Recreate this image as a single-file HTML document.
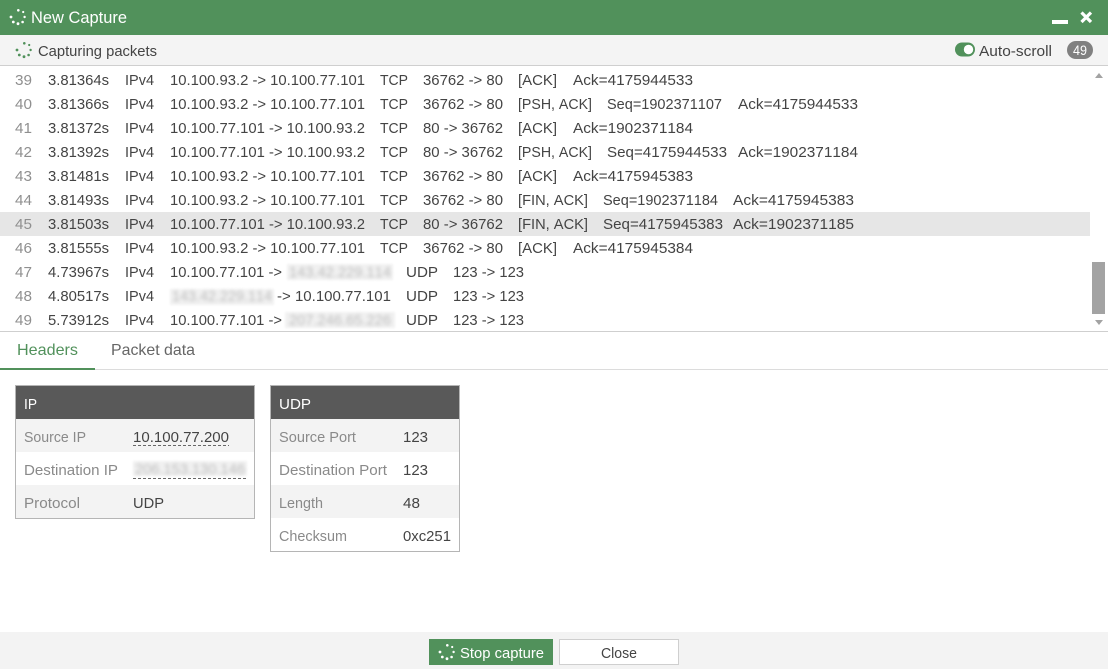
<!DOCTYPE html>
<html><head><meta charset="utf-8"><title>New Capture</title>
<style>
html,body{margin:0;padding:0;background:#fff;width:1108px;height:669px;overflow:hidden}
svg{display:block;font-family:"Liberation Sans",sans-serif;font-size:14.5px;fill:#444;font-kerning:none}
.n{fill:#8f8f8f}.l{fill:#8a8a8a}
.h{fill:#fff;font-size:15px}
.b{filter:url(#bl);fill:#bdbdbd}
.br{filter:url(#bs);fill:#f1f1f1}
</style></head><body>
<svg width="1108" height="669" viewBox="0 0 1108 669" xmlns="http://www.w3.org/2000/svg">
<defs>
<filter id="bl" x="-10%" y="-60%" width="120%" height="220%"><feGaussianBlur stdDeviation="1.8"/></filter>
<filter id="bs" x="-10%" y="-30%" width="120%" height="160%"><feGaussianBlur stdDeviation="1.2"/></filter>
<g id="sp"><circle cx="0.300" cy="-6.700" r="1.300"/><circle cx="5.200" cy="-5" r="1.100"/><circle cx="6.600" cy="0" r="1.200"/><circle cx="4.600" cy="5" r="1.300"/><circle cx="0" cy="6.700" r="1.400"/><circle cx="-4.700" cy="5" r="1.400"/><circle cx="-7" cy="0" r="1.400"/></g>
</defs>
<rect x="0" y="0" width="1108" height="35" fill="#51915b"/>
<use href="#sp" x="18" y="17" fill="#fff"/>
<text x="31" y="23" textLength="96" lengthAdjust="spacingAndGlyphs" style="fill:#fff;font-size:16.5px">New Capture</text>
<rect x="1052" y="20" width="16" height="4" fill="#fff"/>
<path d="M1081.500 12.500L1091 22M1091 12.500L1081.500 22" stroke="#fff" stroke-width="3.200" fill="none"/>

<rect x="0" y="35" width="1108" height="30" fill="#f4f4f4"/>
<rect x="0" y="65" width="1108" height="1" fill="#cfcfcf"/>
<use href="#sp" x="24" y="50" fill="#51915b"/>
<text x="38" y="56" textLength="119" lengthAdjust="spacingAndGlyphs">Capturing packets</text>
<rect x="955" y="42.500" width="20" height="14" rx="7" fill="#51915b"/>
<circle cx="968.500" cy="49.500" r="4.700" fill="#fff"/>
<text x="979" y="56" textLength="73" lengthAdjust="spacingAndGlyphs">Auto-scroll</text>
<rect x="1067" y="41" width="26" height="18" rx="9" fill="#808080"/>
<text x="1073" y="55" textLength="14" lengthAdjust="spacingAndGlyphs" style="fill:#fff;font-size:14px">49</text>

<rect x="0" y="212" width="1090" height="24" fill="#e6e6e6"/>

<!-- 39 -->
<text class="n" x="15" y="85" textLength="17" lengthAdjust="spacingAndGlyphs">39</text><text x="48" y="85" textLength="61" lengthAdjust="spacingAndGlyphs">3.81364s</text><text x="125" y="85" textLength="29" lengthAdjust="spacingAndGlyphs">IPv4</text><text x="170" y="85" textLength="195" lengthAdjust="spacingAndGlyphs">10.100.93.2 -&gt; 10.100.77.101</text><text x="380" y="85" textLength="28" lengthAdjust="spacingAndGlyphs">TCP</text><text x="423" y="85" textLength="80" lengthAdjust="spacingAndGlyphs">36762 -&gt; 80</text><text x="518" y="85" textLength="39" lengthAdjust="spacingAndGlyphs">[ACK]</text><text x="573" y="85" textLength="120" lengthAdjust="spacingAndGlyphs">Ack=4175944533</text>
<!-- 40 -->
<text class="n" x="15" y="109" textLength="17" lengthAdjust="spacingAndGlyphs">40</text><text x="48" y="109" textLength="61" lengthAdjust="spacingAndGlyphs">3.81366s</text><text x="125" y="109" textLength="29" lengthAdjust="spacingAndGlyphs">IPv4</text><text x="170" y="109" textLength="195" lengthAdjust="spacingAndGlyphs">10.100.93.2 -&gt; 10.100.77.101</text><text x="380" y="109" textLength="28" lengthAdjust="spacingAndGlyphs">TCP</text><text x="423" y="109" textLength="80" lengthAdjust="spacingAndGlyphs">36762 -&gt; 80</text><text x="518" y="109" textLength="74" lengthAdjust="spacingAndGlyphs">[PSH, ACK]</text><text x="607" y="109" textLength="115" lengthAdjust="spacingAndGlyphs">Seq=1902371107</text><text x="738" y="109" textLength="120" lengthAdjust="spacingAndGlyphs">Ack=4175944533</text>
<!-- 41 -->
<text class="n" x="15" y="133" textLength="17" lengthAdjust="spacingAndGlyphs">41</text><text x="48" y="133" textLength="61" lengthAdjust="spacingAndGlyphs">3.81372s</text><text x="125" y="133" textLength="29" lengthAdjust="spacingAndGlyphs">IPv4</text><text x="170" y="133" textLength="195" lengthAdjust="spacingAndGlyphs">10.100.77.101 -&gt; 10.100.93.2</text><text x="380" y="133" textLength="28" lengthAdjust="spacingAndGlyphs">TCP</text><text x="423" y="133" textLength="80" lengthAdjust="spacingAndGlyphs">80 -&gt; 36762</text><text x="518" y="133" textLength="39" lengthAdjust="spacingAndGlyphs">[ACK]</text><text x="573" y="133" textLength="120" lengthAdjust="spacingAndGlyphs">Ack=1902371184</text>
<!-- 42 -->
<text class="n" x="15" y="157" textLength="17" lengthAdjust="spacingAndGlyphs">42</text><text x="48" y="157" textLength="61" lengthAdjust="spacingAndGlyphs">3.81392s</text><text x="125" y="157" textLength="29" lengthAdjust="spacingAndGlyphs">IPv4</text><text x="170" y="157" textLength="195" lengthAdjust="spacingAndGlyphs">10.100.77.101 -&gt; 10.100.93.2</text><text x="380" y="157" textLength="28" lengthAdjust="spacingAndGlyphs">TCP</text><text x="423" y="157" textLength="80" lengthAdjust="spacingAndGlyphs">80 -&gt; 36762</text><text x="518" y="157" textLength="74" lengthAdjust="spacingAndGlyphs">[PSH, ACK]</text><text x="607" y="157" textLength="120" lengthAdjust="spacingAndGlyphs">Seq=4175944533</text><text x="738" y="157" textLength="120" lengthAdjust="spacingAndGlyphs">Ack=1902371184</text>
<!-- 43 -->
<text class="n" x="15" y="181" textLength="17" lengthAdjust="spacingAndGlyphs">43</text><text x="48" y="181" textLength="61" lengthAdjust="spacingAndGlyphs">3.81481s</text><text x="125" y="181" textLength="29" lengthAdjust="spacingAndGlyphs">IPv4</text><text x="170" y="181" textLength="195" lengthAdjust="spacingAndGlyphs">10.100.93.2 -&gt; 10.100.77.101</text><text x="380" y="181" textLength="28" lengthAdjust="spacingAndGlyphs">TCP</text><text x="423" y="181" textLength="80" lengthAdjust="spacingAndGlyphs">36762 -&gt; 80</text><text x="518" y="181" textLength="39" lengthAdjust="spacingAndGlyphs">[ACK]</text><text x="573" y="181" textLength="120" lengthAdjust="spacingAndGlyphs">Ack=4175945383</text>
<!-- 44 -->
<text class="n" x="15" y="205" textLength="17" lengthAdjust="spacingAndGlyphs">44</text><text x="48" y="205" textLength="61" lengthAdjust="spacingAndGlyphs">3.81493s</text><text x="125" y="205" textLength="29" lengthAdjust="spacingAndGlyphs">IPv4</text><text x="170" y="205" textLength="195" lengthAdjust="spacingAndGlyphs">10.100.93.2 -&gt; 10.100.77.101</text><text x="380" y="205" textLength="28" lengthAdjust="spacingAndGlyphs">TCP</text><text x="423" y="205" textLength="80" lengthAdjust="spacingAndGlyphs">36762 -&gt; 80</text><text x="518" y="205" textLength="70" lengthAdjust="spacingAndGlyphs">[FIN, ACK]</text><text x="603" y="205" textLength="115" lengthAdjust="spacingAndGlyphs">Seq=1902371184</text><text x="733" y="205" textLength="121" lengthAdjust="spacingAndGlyphs">Ack=4175945383</text>
<!-- 45 -->
<text class="n" x="15" y="229" textLength="17" lengthAdjust="spacingAndGlyphs">45</text><text x="48" y="229" textLength="61" lengthAdjust="spacingAndGlyphs">3.81503s</text><text x="125" y="229" textLength="29" lengthAdjust="spacingAndGlyphs">IPv4</text><text x="170" y="229" textLength="195" lengthAdjust="spacingAndGlyphs">10.100.77.101 -&gt; 10.100.93.2</text><text x="380" y="229" textLength="28" lengthAdjust="spacingAndGlyphs">TCP</text><text x="423" y="229" textLength="80" lengthAdjust="spacingAndGlyphs">80 -&gt; 36762</text><text x="518" y="229" textLength="70" lengthAdjust="spacingAndGlyphs">[FIN, ACK]</text><text x="603" y="229" textLength="120" lengthAdjust="spacingAndGlyphs">Seq=4175945383</text><text x="733" y="229" textLength="121" lengthAdjust="spacingAndGlyphs">Ack=1902371185</text>
<!-- 46 -->
<text class="n" x="15" y="253" textLength="17" lengthAdjust="spacingAndGlyphs">46</text><text x="48" y="253" textLength="61" lengthAdjust="spacingAndGlyphs">3.81555s</text><text x="125" y="253" textLength="29" lengthAdjust="spacingAndGlyphs">IPv4</text><text x="170" y="253" textLength="195" lengthAdjust="spacingAndGlyphs">10.100.93.2 -&gt; 10.100.77.101</text><text x="380" y="253" textLength="28" lengthAdjust="spacingAndGlyphs">TCP</text><text x="423" y="253" textLength="80" lengthAdjust="spacingAndGlyphs">36762 -&gt; 80</text><text x="518" y="253" textLength="39" lengthAdjust="spacingAndGlyphs">[ACK]</text><text x="573" y="253" textLength="120" lengthAdjust="spacingAndGlyphs">Ack=4175945384</text>
<!-- 47 -->
<text class="n" x="15" y="277" textLength="17" lengthAdjust="spacingAndGlyphs">47</text><text x="48" y="277" textLength="61" lengthAdjust="spacingAndGlyphs">4.73967s</text><text x="125" y="277" textLength="29" lengthAdjust="spacingAndGlyphs">IPv4</text><text x="170" y="277" textLength="112" lengthAdjust="spacingAndGlyphs">10.100.77.101 -&gt;</text><rect class="br" x="287" y="264" width="106" height="16"/><text class="b" x="289" y="277" textLength="102" lengthAdjust="spacingAndGlyphs">143.42.229.114</text><text x="406" y="277" textLength="32" lengthAdjust="spacingAndGlyphs">UDP</text><text x="453" y="277" textLength="71" lengthAdjust="spacingAndGlyphs">123 -&gt; 123</text>
<!-- 48 -->
<text class="n" x="15" y="301" textLength="17" lengthAdjust="spacingAndGlyphs">48</text><text x="48" y="301" textLength="61" lengthAdjust="spacingAndGlyphs">4.80517s</text><text x="125" y="301" textLength="29" lengthAdjust="spacingAndGlyphs">IPv4</text><rect class="br" x="170" y="289" width="104" height="16"/><text class="b" x="172" y="301" textLength="100" lengthAdjust="spacingAndGlyphs">143.42.229.114</text><text x="277" y="301" textLength="114" lengthAdjust="spacingAndGlyphs">-&gt; 10.100.77.101</text><text x="406" y="301" textLength="32" lengthAdjust="spacingAndGlyphs">UDP</text><text x="453" y="301" textLength="71" lengthAdjust="spacingAndGlyphs">123 -&gt; 123</text>
<!-- 49 -->
<text class="n" x="15" y="325" textLength="17" lengthAdjust="spacingAndGlyphs">49</text><text x="48" y="325" textLength="61" lengthAdjust="spacingAndGlyphs">5.73912s</text><text x="125" y="325" textLength="29" lengthAdjust="spacingAndGlyphs">IPv4</text><text x="170" y="325" textLength="112" lengthAdjust="spacingAndGlyphs">10.100.77.101 -&gt;</text><rect class="br" x="285" y="312" width="110" height="16"/><text class="b" x="289" y="325" textLength="102" lengthAdjust="spacingAndGlyphs">207.246.65.226</text><text x="406" y="325" textLength="32" lengthAdjust="spacingAndGlyphs">UDP</text><text x="453" y="325" textLength="71" lengthAdjust="spacingAndGlyphs">123 -&gt; 123</text>

<!-- scrollbar -->
<path d="M1095 78L1099 73L1103 78Z" fill="#a3a3a3"/>
<rect x="1092" y="262" width="13" height="52" fill="#a3a3a3"/>
<path d="M1095 320L1103 320L1099 325Z" fill="#a3a3a3"/>

<rect x="0" y="331" width="1108" height="1" fill="#cfcfcf"/>
<rect x="0" y="369" width="1108" height="1" fill="#dcdcdc"/>
<rect x="0" y="368" width="95" height="2" fill="#51915b"/>
<text x="17" y="355" textLength="61" lengthAdjust="spacingAndGlyphs" style="fill:#51915b;font-size:16px">Headers</text>
<text x="111" y="355" textLength="84" lengthAdjust="spacingAndGlyphs" style="fill:#666;font-size:16px">Packet data</text>

<!-- IP table -->
<rect x="15.500" y="385.500" width="239" height="133" fill="#fff" stroke="#b5b5b5"/>
<rect x="16" y="386" width="238" height="33" fill="#595959"/>
<rect x="16" y="419" width="238" height="33" fill="#f3f3f3"/>
<rect x="16" y="485" width="238" height="33" fill="#f3f3f3"/>
<text class="h" x="24" y="409" textLength="13" lengthAdjust="spacingAndGlyphs">IP</text>
<text class="l" x="24" y="442" textLength="62" lengthAdjust="spacingAndGlyphs">Source IP</text>
<text x="133" y="442" textLength="96" lengthAdjust="spacingAndGlyphs">10.100.77.200</text>
<path d="M133 445.500H229" stroke="#666" stroke-dasharray="3 2" fill="none"/>
<text class="l" x="24" y="475" textLength="94" lengthAdjust="spacingAndGlyphs">Destination IP</text>
<rect class="br" x="133" y="461" width="114" height="15"/>
<text class="b" x="135" y="474" textLength="110" lengthAdjust="spacingAndGlyphs">206.153.130.146</text>
<path d="M133 478.500H247" stroke="#666" stroke-dasharray="3 2" fill="none"/>
<text class="l" x="24" y="508" textLength="56" lengthAdjust="spacingAndGlyphs">Protocol</text>
<text x="133" y="508" textLength="31" lengthAdjust="spacingAndGlyphs">UDP</text>

<!-- UDP table -->
<rect x="270.500" y="385.500" width="189" height="166" fill="#fff" stroke="#b5b5b5"/>
<rect x="271" y="386" width="188" height="33" fill="#595959"/>
<rect x="271" y="419" width="188" height="33" fill="#f3f3f3"/>
<rect x="271" y="485" width="188" height="33" fill="#f3f3f3"/>
<text class="h" x="279" y="409" textLength="32" lengthAdjust="spacingAndGlyphs">UDP</text>
<text class="l" x="279" y="442" textLength="77" lengthAdjust="spacingAndGlyphs">Source Port</text>
<text x="403" y="442" textLength="25" lengthAdjust="spacingAndGlyphs">123</text>
<text class="l" x="279" y="475" textLength="108" lengthAdjust="spacingAndGlyphs">Destination Port</text>
<text x="403" y="475" textLength="25" lengthAdjust="spacingAndGlyphs">123</text>
<text class="l" x="279" y="508" textLength="44" lengthAdjust="spacingAndGlyphs">Length</text>
<text x="403" y="508" textLength="17" lengthAdjust="spacingAndGlyphs">48</text>
<text class="l" x="279" y="541" textLength="68" lengthAdjust="spacingAndGlyphs">Checksum</text>
<text x="403" y="541" textLength="48" lengthAdjust="spacingAndGlyphs">0xc251</text>

<!-- footer -->
<rect x="0" y="632" width="1108" height="37" fill="#f3f3f3"/>
<rect x="429" y="639" width="124" height="26" fill="#51915b"/>
<use href="#sp" x="447" y="652" fill="#fff"/>
<text x="460" y="658" textLength="84" lengthAdjust="spacingAndGlyphs" style="fill:#fff">Stop capture</text>
<rect x="559.500" y="639.500" width="119" height="25" fill="#fff" stroke="#cfcfcf"/>
<text x="601" y="658" textLength="36" lengthAdjust="spacingAndGlyphs">Close</text>
</svg>
</body></html>
